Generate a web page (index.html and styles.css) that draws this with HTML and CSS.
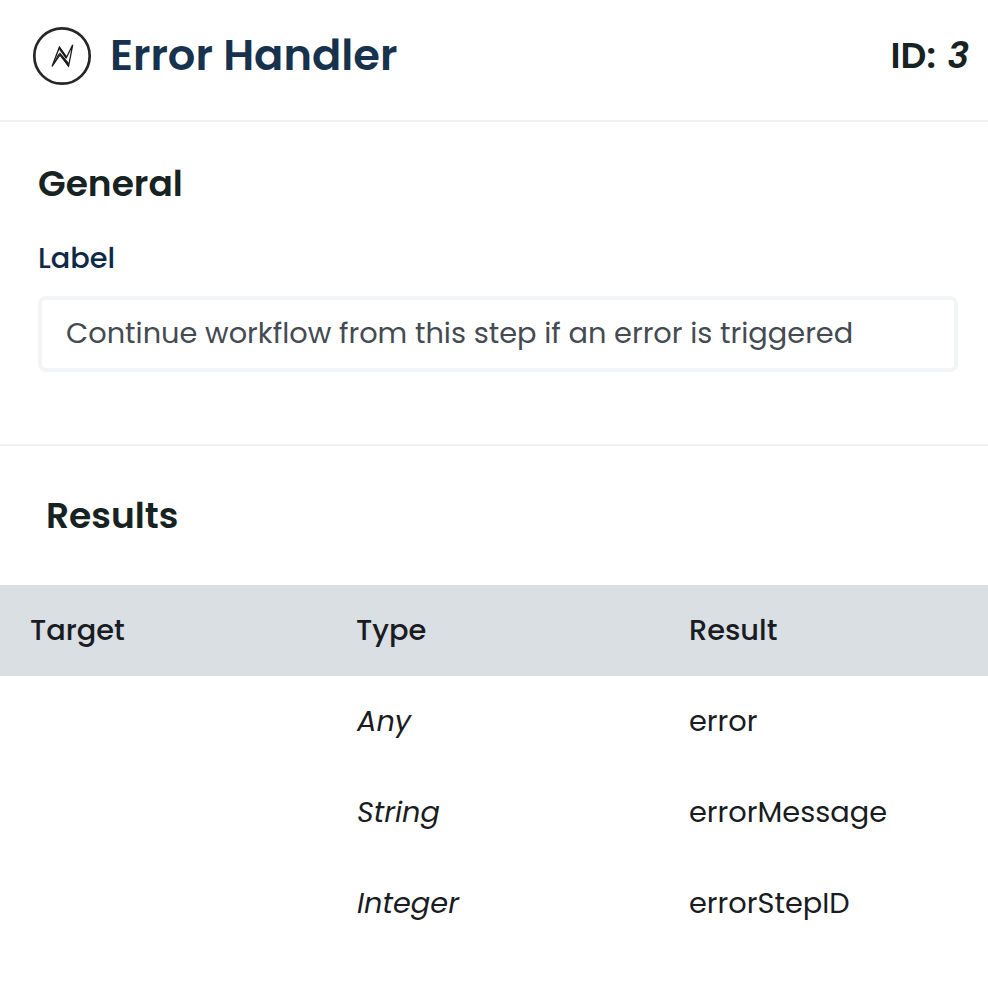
FILE: index.html
```html
<!DOCTYPE html>
<html lang="en">

<head>
  <meta charset="UTF-8">
  <meta name="viewport" content="width=device-width, initial-scale=1.0">
  <title>Error Handler</title>
  <link rel="stylesheet" href="styles.css">
</head>

<body>
  <header class="header">
    <svg class="header-icon" width="60" height="60" viewBox="0 0 60 60" fill="none">
      <circle cx="30" cy="30" r="27.7" stroke="#262626" stroke-width="2.7"/>
      <path d="M20 40.4L27.4 21.2L34.6 31.2L40.7 18.8L36.6 40L28 29Z" fill="#fff" stroke="#1c1c1c" stroke-width="1.3"/>
      <path d="M19.6 41L27.8 28.2L36.6 41.4L36.9 37L28 26.4L25.8 28.8Z" fill="#1c1c1c"/>
      <path d="M26.8 22.4L27.4 20.2L34.6 30.6L34.2 33.2L27.6 24.2Z" fill="#1c1c1c"/>
    </svg>
    <h1>Error Handler</h1>
    <div class="step-id">ID: <em>3</em></div>
  </header>

  <section class="general">
    <h2>General</h2>
    <label for="label">Label</label>
    <input id="label" type="text" value="Continue workflow from this step if an error is triggered">
  </section>

  <section class="results">
    <h2>Results</h2>
    <table>
      <thead>
        <tr>
          <th class="col-target">Target</th>
          <th class="col-type">Type</th>
          <th>Result</th>
        </tr>
      </thead>
      <tbody>
        <tr>
          <td></td>
          <td class="type">Any</td>
          <td>error</td>
        </tr>
        <tr>
          <td></td>
          <td class="type">String</td>
          <td>errorMessage</td>
        </tr>
        <tr>
          <td></td>
          <td class="type">Integer</td>
          <td>errorStepID</td>
        </tr>
      </tbody>
    </table>
  </section>
</body>

</html>
```
FILE: styles.css
```css
* {
  box-sizing: border-box;
}

body {
  font-family: Poppins, Inter, sans-serif;
  background-color: #fff;
  color: #191c22;
  font-size: 28.8px;
  margin: 0;
}

.header {
  display: flex;
  align-items: center;
  height: 122px;
  padding: 0 19px 8px 32px;
  border-bottom: 2px solid #f1f2f3;
}

h1 {
  margin: 0 auto 2px 18px;
  color: #17324d;
  font-size: 43.2px;
  font-weight: 600;
  line-height: 60px;
}

.step-id {
  color: #172222;
  font-size: 36px;
  font-weight: 600;
  line-height: 60px;
}

.step-id em {
  margin-left: 3px;
}

h2 {
  margin: 0;
  color: #172222;
  font-size: 36px;
  font-weight: 600;
  line-height: 54px;
}

.general {
  height: 324px;
  padding: 35px 30px 0 38px;
  border-bottom: 2px solid #f1f2f3;
}

label {
  display: block;
  margin: 27px 0 18px;
  color: #0f2a47;
  font-weight: 500;
  line-height: 40px;
}

input {
  display: block;
  width: 100%;
  height: 76px;
  padding: 0 24px 2px;
  border: 4px solid #f2f4f6;
  border-radius: 8px;
  background-color: #fff;
  color: #444b52;
  font-family: inherit;
  font-size: 28.8px;
}

.results h2 {
  padding: 43px 0 42px 46px;
}

table {
  width: 100%;
  border-collapse: collapse;
  table-layout: fixed;
}

th,
td {
  height: 91px;
  padding: 0;
  text-align: left;
  font-weight: 400;
}

th {
  background-color: #dadfe3;
  font-weight: 500;
}

.col-target {
  width: 356px;
  padding-left: 30px;
}

.col-type {
  width: 333px;
}

.type {
  padding-left: 1px;
  font-style: italic;
}
```
